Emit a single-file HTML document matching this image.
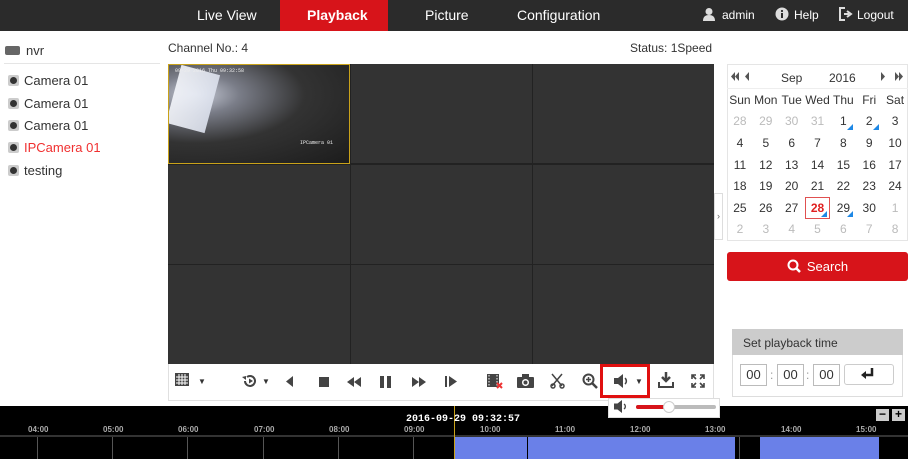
<!DOCTYPE html>
<html><head><meta charset="utf-8"><style>
*{margin:0;padding:0;box-sizing:border-box}
body{width:908px;height:459px;overflow:hidden;background:#fff;font-family:"Liberation Sans",sans-serif;position:relative;color:#333}
.a{position:absolute}
.hdr{left:0;top:0;width:908px;height:31px;background:#2b2b2b;color:#fff;font-size:14px}
.hdr span{position:absolute;top:7px}
.cam{left:8px;font-size:13px;color:#333}
.cam i{display:inline-block;width:11px;height:11px;border-radius:2px;background:#ccc;vertical-align:-1px;margin-right:5px;position:relative}
.cam i:after{content:"";position:absolute;left:2px;top:2px;width:7px;height:7px;border-radius:50%;background:#333}
.cell{position:absolute;width:181px;height:99px;background:#333}
.cal td{width:25.9px;height:21.6px;text-align:center;font-size:12px;color:#333;padding:0;position:relative}
.cal td.g{color:#bbb}
.cal td.m:after{content:"";position:absolute;right:3px;bottom:2px;border-left:6px solid transparent;border-bottom:6px solid #1e88e5}
.tb{font-size:14px;color:#333;top:372px}
.tick{position:absolute;top:425px;font-size:8px;color:#aaa;font-weight:bold}
.vl{position:absolute;top:437px;width:1px;height:22px;background:#555}
.tbox{position:absolute;top:364px;width:27px;height:22px;border:1px solid #bbb;font-size:13px;text-align:center;line-height:20px}
</style></head><body>
<div class="a hdr">
<div class="a" style="left:280px;top:0;width:108px;height:31px;background:#d7141a"></div>
<span style="left:197px">Live View</span>
<span style="left:307px;font-weight:bold">Playback</span>
<span style="left:425px">Picture</span>
<span style="left:517px">Configuration</span>
<svg class="a" style="left:702px;top:7px" width="14" height="15"><circle cx="7" cy="4.5" r="3.5" fill="#ddd"/><path d="M1 14 Q1 8 7 8 Q13 8 13 14Z" fill="#ddd"/></svg>
<span style="left:722px;font-size:12px;top:8px">admin</span>
<svg class="a" style="left:775px;top:7px" width="14" height="14"><circle cx="7" cy="7" r="6.5" fill="#ddd"/><rect x="6" y="6" width="2" height="5" fill="#2b2b2b"/><circle cx="7" cy="4" r="1.1" fill="#2b2b2b"/></svg>
<span style="left:794px;font-size:12px;top:8px">Help</span>
<svg class="a" style="left:839px;top:7px" width="14" height="14"><path d="M6 1H1v12h5" stroke="#ddd" stroke-width="2" fill="none"/><path d="M5 7h5M8 4l4 3-4 3" stroke="#ddd" stroke-width="2" fill="none"/></svg>
<span style="left:857px;font-size:12px;top:8px">Logout</span>
</div>
<div class="a" style="left:5px;top:46px;width:15px;height:9px;background:#666;border-radius:2px"></div>
<div class="a" style="left:26px;top:43px;font-size:13px">nvr</div>
<div class="a" style="left:4px;top:63px;width:156px;height:1px;background:#e5e5e5"></div>
<div class="a cam" style="top:73px"><i></i>Camera 01</div>
<div class="a cam" style="top:96px"><i></i>Camera 01</div>
<div class="a cam" style="top:118px"><i></i>Camera 01</div>
<div class="a cam" style="top:140px;color:#f03030"><i></i>IPCamera 01</div>
<div class="a cam" style="top:163px"><i></i>testing</div>
<div class="a" style="left:168px;top:41px;font-size:12px">Channel No.: 4</div>
<div class="a" style="left:630px;top:41px;font-size:12px">Status: 1Speed</div>
<div class="a" style="left:168px;top:64px;width:546px;height:300px;background:#222"></div>
<div class="cell" style="left:168px;top:64px;background:radial-gradient(ellipse at 15% 30%,#c8ccd8 0%,#7a7d88 20%,#333 50%,#1c1c1c 100%);border:1px solid #c9a21a;width:182px;height:100px;overflow:hidden"><div style="position:absolute;left:4px;top:4px;width:40px;height:60px;background:linear-gradient(90deg,#f4f6fb,#dde2ee);transform:rotate(15deg);opacity:.9"></div></div>
<div class="a" style="left:175px;top:68px;font-size:5px;color:#eee;font-family:'Liberation Mono',monospace">09-29 2016 Thu 09:32:58</div>
<div class="a" style="left:300px;top:140px;font-size:5px;color:#eee;font-family:'Liberation Mono',monospace">IPCamera 01</div>
<div class="cell" style="left:351px;top:64px"></div><div class="cell" style="left:533px;top:64px"></div>
<div class="cell" style="left:168px;top:165px;width:182px"></div><div class="cell" style="left:351px;top:165px"></div><div class="cell" style="left:533px;top:165px"></div>
<div class="cell" style="left:168px;top:265px;width:182px"></div><div class="cell" style="left:351px;top:265px"></div><div class="cell" style="left:533px;top:265px"></div>
<div class="a" style="left:714px;top:193px;width:9px;height:47px;border:1px solid #ddd;font-size:9px;color:#666;line-height:45px;text-align:center">›</div>
<div class="a" style="left:168px;top:364px;width:546px;height:37px;border:1px solid #e0e0e0;border-top:none"></div>
<svg class="a" style="left:175px;top:373px" width="14" height="13"><rect width="14" height="13" fill="#444"/><path d="M1 4h12M1 7h12M1 10h12M4 1v11M7 1v11M10 1v11" stroke="#fff"/></svg>
<div class="a tb" style="left:198px;font-size:8px;top:377px">▼</div>
<svg class="a" style="left:242px;top:374px" width="16" height="14"><path d="M3 7a5 5 0 1 0 2-4" stroke="#444" stroke-width="2" fill="none"/><path d="M0 3l4-1 0 4z" fill="#444"/><path d="M7 4.5l4 2.5-4 2.5z" fill="#444"/></svg>
<div class="a tb" style="left:262px;font-size:8px;top:377px">▼</div>
<svg class="a" style="left:286px;top:376px" width="8" height="11"><path d="M7 0v11L0 5.5z" fill="#444"/></svg>
<div class="a" style="left:319px;top:377px;width:10px;height:10px;background:#444"></div>
<svg class="a" style="left:347px;top:377px" width="14" height="10"><path d="M7 0v10L0 5zM14 0v10L7 5z" fill="#444"/></svg>
<svg class="a" style="left:380px;top:376px" width="11" height="12"><rect width="4" height="12" fill="#444"/><rect x="7" width="4" height="12" fill="#444"/></svg>
<svg class="a" style="left:412px;top:377px" width="14" height="10"><path d="M0 0v10L7 5zM7 0v10L14 5z" fill="#444"/></svg>
<svg class="a" style="left:445px;top:376px" width="12" height="11"><rect width="2" height="11" fill="#444"/><path d="M4 0v11l8-5.5z" fill="#444"/></svg>
<svg class="a" style="left:487px;top:374px" width="16" height="15"><rect width="12" height="13" fill="#444"/><path d="M2 1v11M10 1v11" stroke="#fff" stroke-dasharray="1.5 1.5"/><path d="M10 9l5 5M15 9l-5 5" stroke="#e33" stroke-width="2"/></svg>
<svg class="a" style="left:517px;top:374px" width="17" height="14"><rect y="3" width="17" height="11" rx="1" fill="#444"/><rect x="5" y="0" width="7" height="4" fill="#444"/><circle cx="8.5" cy="8.5" r="3.5" fill="#fff"/><circle cx="8.5" cy="8.5" r="2" fill="#444"/></svg>
<svg class="a" style="left:550px;top:373px" width="15" height="16"><path d="M2 1l10 12M12 1L2 13" stroke="#444" stroke-width="1.5"/><circle cx="3" cy="13" r="2" fill="none" stroke="#444" stroke-width="1.5"/><circle cx="12" cy="13" r="2" fill="none" stroke="#444" stroke-width="1.5"/></svg>
<svg class="a" style="left:582px;top:373px" width="16" height="16"><circle cx="6.5" cy="6.5" r="5" stroke="#444" stroke-width="2" fill="none"/><path d="M10 10l5 5" stroke="#444" stroke-width="2.5"/><path d="M4 6.5h5M6.5 4v5" stroke="#444" stroke-width="1.5"/></svg>
<div class="a" style="left:600px;top:364px;width:50px;height:34px;border:3px solid #e01010"></div>
<svg class="a" style="left:614px;top:374px" width="16" height="14"><path d="M0 4h4l5-4v14L4 10H0z" fill="#444"/><path d="M11 4a4 4 0 0 1 0 6" stroke="#444" stroke-width="1.5" fill="none"/></svg>
<div class="a tb" style="left:635px;font-size:8px;top:377px">▼</div>
<svg class="a" style="left:658px;top:372px" width="16" height="16"><path d="M8 0v9M4 5l4 4 4-4" stroke="#444" stroke-width="2.5" fill="none"/><path d="M1 10v5h14v-5" stroke="#444" stroke-width="2" fill="none"/></svg>
<svg class="a" style="left:691px;top:374px" width="14" height="14" stroke="#444" stroke-width="1.6" fill="none"><path d="M1 5V1h4M1 1l4 4M13 5V1H9M13 1L9 5M1 9v4h4M1 13l4-4M13 9v4H9M13 13L9 9"/></svg>
<div class="a" style="left:608px;top:398px;width:112px;height:20px;background:#fff;border:1px solid #ddd;z-index:3"></div>
<svg class="a" style="left:614px;top:400px;z-index:4" width="14" height="13"><path d="M0 3.5h3.5l4.5-3.5v13L3.5 9.5H0z" fill="#444"/><path d="M10 4a3 3 0 0 1 0 5" stroke="#444" stroke-width="1.3" fill="none"/></svg>
<div class="a" style="left:636px;top:405px;width:80px;height:4px;background:#bbb;border-radius:2px;z-index:4"></div>
<div class="a" style="left:636px;top:405px;width:32px;height:4px;background:#d7141a;border-radius:2px;z-index:4"></div>
<div class="a" style="left:663px;top:401px;width:12px;height:12px;border-radius:50%;background:#fff;border:1px solid #ccc;z-index:5"></div>
<div class="a" style="left:0;top:406px;width:908px;height:53px;background:#000"></div>
<div class="a" style="left:0;top:435px;width:908px;height:2px;background:#333"></div>
<div class="vl" style="left:37px"></div><div class="vl" style="left:112px"></div><div class="vl" style="left:187px"></div><div class="vl" style="left:263px"></div><div class="vl" style="left:338px"></div><div class="vl" style="left:413px"></div><div class="vl" style="left:739px"></div>
<div class="a" style="left:455px;top:437px;width:72px;height:22px;background:#6a80e8"></div>
<div class="a" style="left:528px;top:437px;width:207px;height:22px;background:#6a80e8"></div>
<div class="a" style="left:760px;top:437px;width:119px;height:22px;background:#6a80e8"></div>
<div class="a" style="left:454px;top:406px;width:1px;height:53px;background:#c9a21a"></div>
<div class="a" style="left:406px;top:414px;font-size:10px;color:#fff;font-weight:bold;font-family:'Liberation Mono',monospace">2016-09-29 09:32:57</div>
<div class="tick" style="left:28px">04:00</div><div class="tick" style="left:103px">05:00</div><div class="tick" style="left:178px">06:00</div><div class="tick" style="left:254px">07:00</div><div class="tick" style="left:329px">08:00</div><div class="tick" style="left:404px">09:00</div><div class="tick" style="left:480px">10:00</div><div class="tick" style="left:555px">11:00</div><div class="tick" style="left:630px">12:00</div><div class="tick" style="left:705px">13:00</div><div class="tick" style="left:781px">14:00</div><div class="tick" style="left:856px">15:00</div>
<div class="a" style="left:876px;top:409px;width:13px;height:12px;background:#ccc;color:#000;font-size:12px;font-weight:bold;text-align:center;line-height:11px">−</div>
<div class="a" style="left:892px;top:409px;width:13px;height:12px;background:#ccc;color:#000;font-size:12px;font-weight:bold;text-align:center;line-height:11px">+</div>
<div class="a" style="left:727px;top:64px;width:181px;height:177px;border:1px solid #e5e5e5"></div>
<div class="a" style="left:727px;top:88px;width:181px;height:1px;background:#eee"></div>
<svg class="a" style="left:731px;top:72px" width="24" height="9" fill="#555"><path d="M4 0v9L0 4.5zM8 0v9L4 4.5zM18 0v9l-4-4.5z"/></svg>
<div class="a" style="left:781px;top:71px;font-size:12px">Sep</div>
<div class="a" style="left:829px;top:71px;font-size:12px">2016</div>
<svg class="a" style="left:881px;top:72px" width="24" height="9" fill="#555"><path d="M0 0v9l4-4.5zM14 0v9l4-4.5zM18 0v9l4-4.5z"/></svg>
<table class="a cal" style="left:727px;top:89px;border-collapse:collapse">
<tr><td>Sun</td><td>Mon</td><td>Tue</td><td>Wed</td><td>Thu</td><td>Fri</td><td>Sat</td></tr>
<tr><td class="g">28</td><td class="g">29</td><td class="g">30</td><td class="g">31</td><td class="m">1</td><td class="m">2</td><td>3</td></tr>
<tr><td>4</td><td>5</td><td>6</td><td>7</td><td>8</td><td>9</td><td>10</td></tr>
<tr><td>11</td><td>12</td><td>13</td><td>14</td><td>15</td><td>16</td><td>17</td></tr>
<tr><td>18</td><td>19</td><td>20</td><td>21</td><td>22</td><td>23</td><td>24</td></tr>
<tr><td>25</td><td>26</td><td>27</td><td class="m" style="color:#e02020;font-weight:bold;outline:1px solid #e05050;outline-offset:-1px">28</td><td class="m">29</td><td>30</td><td class="g">1</td></tr>
<tr><td class="g">2</td><td class="g">3</td><td class="g">4</td><td class="g">5</td><td class="g">6</td><td class="g">7</td><td class="g">8</td></tr>
</table>
<div class="a" style="left:727px;top:252px;width:181px;height:29px;background:#d7141a;border-radius:3px;color:#fff;font-size:13px;line-height:29px;text-align:center">
<svg style="vertical-align:-2px;margin-right:6px" width="14" height="14"><circle cx="6" cy="6" r="4.5" stroke="#fff" stroke-width="2" fill="none"/><path d="M9 9l4 4" stroke="#fff" stroke-width="2.5"/></svg>Search</div>
<div class="a" style="left:732px;top:329px;width:171px;height:68px;border:1px solid #ddd"></div>
<div class="a" style="left:732px;top:329px;width:171px;height:26px;background:#ccc;font-size:12px;padding:7px 0 0 11px">Set playback time</div>
<div class="tbox" style="left:740px">00</div><div class="a" style="left:770px;top:368px;font-size:12px;color:#999">:</div>
<div class="tbox" style="left:777px">00</div><div class="a" style="left:806px;top:368px;font-size:12px;color:#999">:</div>
<div class="tbox" style="left:813px">00</div>
<div class="a" style="left:844px;top:364px;width:50px;height:21px;border:1px solid #ccc;border-radius:3px"></div>
<svg class="a" style="left:861px;top:368px" width="14" height="12"><path d="M11 0v7H4" stroke="#222" stroke-width="2.5" fill="none"/><path d="M0 7l5-4v8z" fill="#222"/></svg>
</body></html>
